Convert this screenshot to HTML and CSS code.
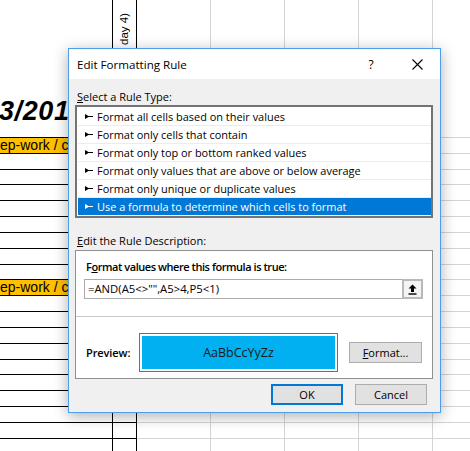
FILE: index.html
```html
<!DOCTYPE html>
<html>
<head>
<meta charset="utf-8">
<link rel="stylesheet" href="styles.css">
</head>
<body>
<div class="sheet">
  <div class="k hdr-a"><span class="big">3/2018</span></div><div class="k hdr-b"><span class="vt">(Setup day 4)</span></div><div></div><div></div><div></div><div></div><div></div>
  <div class="k y"><span class="cell-text">Prep-work / cleanup</span></div><div class="k"></div><div></div><div></div><div></div><div></div><div></div>
  <div class="k"></div><div class="k"></div><div></div><div></div><div></div><div></div><div></div>
  <div class="k"></div><div class="k"></div><div></div><div></div><div></div><div></div><div></div>
  <div class="k"></div><div class="k"></div><div></div><div></div><div></div><div></div><div></div>
  <div class="k"></div><div class="k"></div><div></div><div></div><div></div><div></div><div></div>
  <div class="k"></div><div class="k"></div><div></div><div></div><div></div><div></div><div></div>
  <div class="k"></div><div class="k"></div><div></div><div></div><div></div><div></div><div></div>
  <div class="k"></div><div class="k"></div><div></div><div></div><div></div><div></div><div></div>
  <div class="k"></div><div class="k"></div><div></div><div></div><div></div><div></div><div></div>
  <div class="k y"><span class="cell-text">Prep-work / cleanup</span></div><div class="k"></div><div></div><div></div><div></div><div></div><div></div>
  <div class="k"></div><div class="k"></div><div></div><div></div><div></div><div></div><div></div>
  <div class="k"></div><div class="k"></div><div></div><div></div><div></div><div></div><div></div>
  <div class="k"></div><div class="k"></div><div></div><div></div><div></div><div></div><div></div>
  <div class="k"></div><div class="k"></div><div></div><div></div><div></div><div></div><div></div>
  <div class="k"></div><div class="k"></div><div></div><div></div><div></div><div></div><div></div>
  <div class="k"></div><div class="k"></div><div></div><div></div><div></div><div></div><div></div>
  <div class="k"></div><div class="k"></div><div></div><div></div><div></div><div></div><div></div>
  <div class="k"></div><div class="k"></div><div></div><div></div><div></div><div></div><div></div>
  <div class="k"></div><div class="k"></div><div></div><div></div><div></div><div></div><div></div>
  <div class="k"></div><div class="k"></div><div></div><div></div><div></div><div></div><div></div>
</div>

<div class="dialog">
  <div class="titlebar">
    <span class="title">Edit Formatting Rule</span>
    <span class="tb-btn help">?</span>
    <span class="tb-btn close"><svg width="11" height="11" viewBox="0 0 11 11"><path d="M0.5 0.5L10.5 10.5M10.5 0.5L0.5 10.5" stroke="#000" stroke-width="1.1" fill="none"/></svg></span>
  </div>
  <div class="body">
    <div class="label"><u>S</u>elect a Rule Type:</div>
    <ul class="rules">
      <li><svg class="arrow" viewBox="0 0 9 7"><path d="M0 1L3.5 3V4L0 6z" fill="currentColor"/><path d="M0 3H8V4H0z" fill="currentColor"/></svg>Format all cells based on their values</li>
      <li><svg class="arrow" viewBox="0 0 9 7"><path d="M0 1L3.5 3V4L0 6z" fill="currentColor"/><path d="M0 3H8V4H0z" fill="currentColor"/></svg>Format only cells that contain</li>
      <li><svg class="arrow" viewBox="0 0 9 7"><path d="M0 1L3.5 3V4L0 6z" fill="currentColor"/><path d="M0 3H8V4H0z" fill="currentColor"/></svg>Format only top or bottom ranked values</li>
      <li><svg class="arrow" viewBox="0 0 9 7"><path d="M0 1L3.5 3V4L0 6z" fill="currentColor"/><path d="M0 3H8V4H0z" fill="currentColor"/></svg>Format only values that are above or below average</li>
      <li><svg class="arrow" viewBox="0 0 9 7"><path d="M0 1L3.5 3V4L0 6z" fill="currentColor"/><path d="M0 3H8V4H0z" fill="currentColor"/></svg>Format only unique or duplicate values</li>
      <li class="sel"><svg class="arrow" viewBox="0 0 9 7"><path d="M0 1L3.5 3V4L0 6z" fill="currentColor"/><path d="M0 3H8V4H0z" fill="currentColor"/></svg>Use a formula to determine which cells to format</li>
    </ul>
    <div class="label label2"><u>E</u>dit the Rule Description:</div>
    <div class="desc">
      <div class="bold-label">F<u>o</u>rmat values where this formula is true:</div>
      <div class="formula">
        <span class="formula-text">=AND(A5&lt;&gt;"",A5&gt;4,P5&lt;1)</span>
        <span class="collapse"><svg width="9" height="11" viewBox="0 0 9 11"><path d="M4.5 0.5L8.5 4.5H6V8H3V4.5H0.5z" fill="#000"/><path d="M0.5 10H8.5" stroke="#000" stroke-width="1.4"/></svg></span>
      </div>
      <div class="sep"></div>
      <div class="preview-row">
        <span class="bold-label preview-label">Preview:</span>
        <div class="preview"><span>AaBbCcYyZz</span></div>
        <span class="btn fmt-btn"><u>F</u>ormat...</span>
      </div>
    </div>
    <div class="actions">
      <span class="btn ok">OK</span>
      <span class="btn">Cancel</span>
    </div>
  </div>
</div>
</body>
</html>
```
FILE: styles.css
```css
html, body {
  margin: 0;
  padding: 0;
  width: 470px;
  height: 451px;
  overflow: hidden;
  background: #fff;
}

.sheet {
  display: grid;
  grid-template-columns: 113px 24px 74px 74px 74px 74px 74px;
  grid-template-rows: 138px repeat(20, 15.84px);
  font-family: "Liberation Sans", Arial, sans-serif;
}

.sheet > div {
  box-sizing: border-box;
  border-right: 1px solid #d4d4d4;
  border-bottom: 1px solid #d4d4d4;
  overflow: hidden;
  position: relative;
}

.sheet > div.k {
  border-color: #000;
}

.sheet > div.y {
  background: #ffc000;
}

.cell-text {
  display: block;
  white-space: nowrap;
  font-size: 14px;
  line-height: 15px;
  margin-left: -14px;
  color: #000;
}

.hdr-a {
  display: flex;
  align-items: flex-end;
  padding-bottom: 13px;
}

.big {
  font-size: 27px;
  line-height: 26px;
  font-weight: bold;
  font-style: italic;
  white-space: nowrap;
  letter-spacing: 0.6px;
  margin-left: -1px;
}

.hdr-b {
  display: flex;
  justify-content: center;
  align-items: flex-start;
}

.vt {
  writing-mode: vertical-rl;
  transform: rotate(180deg);
  font-size: 11.5px;
  line-height: 13px;
  margin-top: 13px;
  white-space: nowrap;
}

/* dialog */
.dialog {
  position: absolute;
  left: 68px;
  top: 48px;
  width: 373px;
  height: 365px;
  box-sizing: border-box;
  border: 1px solid #4d9ee8;
  background: #f0f0f0;
  box-shadow: 0 3px 14px rgba(0, 0, 0, 0.32);
  font-family: "Open Sans", "Noto Sans", sans-serif;
  font-size: 11px;
  color: #000;
  display: flex;
  flex-direction: column;
}

.titlebar {
  height: 30px;
  background: #fff;
  display: flex;
  align-items: center;
  padding-left: 8px;
}

.title {
  flex: 1;
  font-size: 11.6px;
}

.tb-btn {
  width: 46px;
  height: 30px;
  display: flex;
  align-items: center;
  justify-content: center;
}

.help {
  font-size: 12px;
}

.body {
  flex: 1;
  padding: 10px 7px 0 6px;
  display: flex;
  flex-direction: column;
}

.label {
  height: 16px;
  line-height: 16px;
  padding-left: 2px;
}

.label2 {
  margin-top: 15px;
  margin-bottom: 1px;
}

.rules {
  list-style: none;
  margin: 0;
  padding: 1px 0 0 1px;
  height: 113px;
  box-sizing: border-box;
  border: 2px solid #737373;
  background: #fff;
}

.rules li {
  height: 17px;
  border-bottom: 1px solid #ececec;
  display: flex;
  align-items: center;
  padding-left: 7px;
  white-space: nowrap;
  font-size: 10.95px;
}

.rules li.sel {
  background: #0078d7;
  color: #fff;
  border-bottom-color: #fff;
}

.arrow {
  width: 9px;
  height: 7px;
  margin-right: 3px;
}

.desc {
  height: 129px;
  box-sizing: border-box;
  border: 1px solid #8f8f8f;
  background: #fff;
  padding: 8px 9px 6px 8px;
  display: flex;
  flex-direction: column;
}

.bold-label {
  font-weight: 600;
  letter-spacing: -0.45px;
  height: 16px;
  line-height: 16px;
  padding-left: 2px;
}

.formula {
  margin-top: 4px;
  height: 20px;
  box-sizing: border-box;
  border: 1px solid #ababab;
  display: flex;
  align-items: stretch;
}

.formula-text {
  flex: 1;
  padding-left: 3px;
  line-height: 18px;
  font-size: 11.3px;
}

.collapse {
  width: 21px;
  margin: -1px -1px -1px 0;
  box-sizing: border-box;
  border: 2px solid #b9b9b9;
  background: #f4f4f4;
  display: flex;
  align-items: center;
  justify-content: center;
}

.sep {
  height: 1px;
  background: #c8c8c8;
  margin: 17px -9px 16px -8px;
}

.preview-row {
  height: 39px;
  display: flex;
  align-items: center;
}

.preview-label {
  width: 53px;
  letter-spacing: -0.1px;
}

.preview {
  width: 199px;
  height: 39px;
  box-sizing: border-box;
  border: 1px solid #6f6f6f;
  padding: 2px;
  background: #fff;
  display: flex;
}

.preview span {
  flex: 1;
  background: #00b0f0;
  display: flex;
  align-items: center;
  justify-content: center;
  font-size: 12.5px;
  color: #1a1a1a;
}

.btn {
  box-sizing: border-box;
  height: 21px;
  width: 72px;
  border: 1px solid #adadad;
  background: #e1e1e1;
  display: flex;
  align-items: center;
  justify-content: center;
}

.fmt-btn {
  margin-left: 11px;
  width: 73px;
}

.actions {
  margin-top: 5px;
  display: flex;
  justify-content: flex-end;
  gap: 12px;
  padding-right: 6px;
}

.btn.ok {
  border: 2px solid #0078d7;
}
```
